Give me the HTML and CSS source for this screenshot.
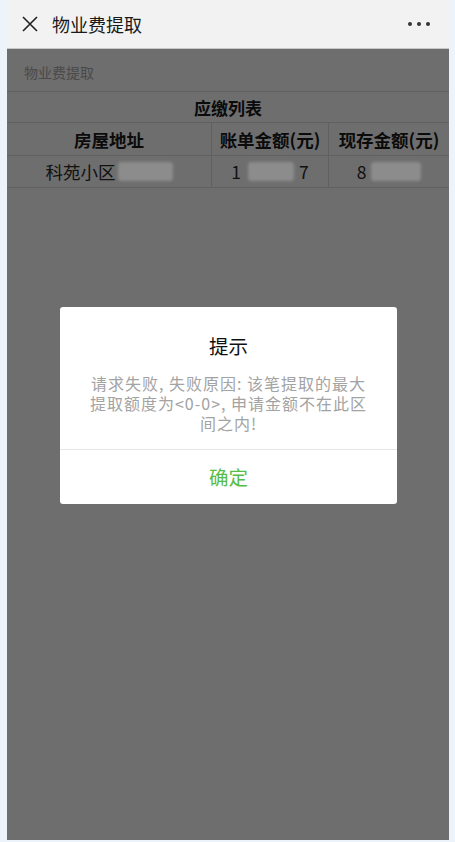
FILE: index.html
```html
<!DOCTYPE html>
<html lang="zh">
<head>
<meta charset="UTF-8">
<title>物业费提取</title>
<link rel="stylesheet" href="styles.css">
</head>
<body>
	<div class="phone">
		<header class="topbar">
			<svg class="icon-close" width="16" height="16" viewBox="0 0 16 16">
				<path d="M1 1L15 15M15 1L1 15" stroke="#222" stroke-width="1.6" fill="none"/>
			</svg>
			<span class="topbar-title">物业费提取</span>
			<span class="topbar-more">
				<i></i><i></i><i></i>
			</span>
		</header>
		<main class="page">
			<div class="page-sub">物业费提取</div>
			<div class="list-title">应缴列表</div>
			<div class="list-row list-head">
				<div class="cell c1">房屋地址</div>
				<div class="cell c2">账单金额(元)</div>
				<div class="cell c3">现存金额(元)</div>
			</div>
			<div class="list-row list-data">
				<div class="cell c1">科苑小区<span class="mask mask-addr"></span></div>
				<div class="cell c2">1<span class="mask mask-bill"></span>7</div>
				<div class="cell c3">8<span class="mask mask-left"></span></div>
			</div>

			<div class="overlay"></div>
			<div class="dialog">
				<div class="dialog-hd">提示</div>
				<div class="dialog-bd">
					<p>请求失败, 失败原因: 该笔提取的最大</p>
					<p>提取额度为&lt;0-0&gt;, 申请金额不在此区</p>
					<p>间之内!</p>
				</div>
				<div class="dialog-ft">确定</div>
			</div>
		</main>
	</div>
</body>
</html>
```

FILE: styles.css
```css
*{padding:0;margin:0;box-sizing:border-box;}
body{
	background:#edf3fb;
	font-family:"Noto Sans CJK SC","Noto Sans",sans-serif;
}
.phone{
	width:442px;
	height:842px;
	margin-left:7px;
	display:flex;
	flex-direction:column;
}
.topbar{
	height:49px;
	background:#f2f2f2;
	border-bottom:1px solid #c8c8c8;
	display:flex;
	align-items:center;
	padding:0 19px 0 15px;
}
.icon-close{margin-right:14px;}
.topbar-title{
	font-size:18px;
	color:#1a1a1a;
	flex:1;
}
.topbar-more{
	display:flex;
	gap:5px;
}
.topbar-more i{
	width:4px;
	height:4px;
	border-radius:50%;
	background:#333;
}
.page{
	flex:1;
	position:relative;
	background:#fcfcfc;
	margin-bottom:2px;
}
.page-sub{
	height:43px;
	line-height:46px;
	padding-left:17px;
	font-size:14px;
	color:#aaa;
	border-bottom:1px solid #dcdcdc;
}
.list-title{
	height:31px;
	line-height:32px;
	text-align:center;
	font-size:17px;
	font-weight:bold;
	color:#1a1a1a;
	border-bottom:1px solid #dcdcdc;
}
.list-row{
	display:flex;
	height:33px;
	border-bottom:1px solid #dcdcdc;
}
.list-data{height:32px;}
.list-head .cell{font-weight:bold;color:#1a1a1a;font-size:17.5px;}
.cell{
	display:flex;
	align-items:center;
	justify-content:center;
	font-size:17.5px;
	color:#2a2a2a;
}
.c1{width:205px;border-right:1px solid #dcdcdc;}
.c2{width:117px;border-right:1px solid #dcdcdc;}
.c3{flex:1;}
.mask{
	display:inline-block;
	height:19px;
	background:#8c8c8c;
	border-radius:3px;
	filter:blur(1.5px);
	position:relative;
	z-index:2;
}
.mask-addr{width:55px;margin-left:2px;}
.mask-bill{width:46px;margin:0 5px 0 7px;}
.mask-left{width:50px;margin-left:5px;}
.overlay{
	position:absolute;
	top:0;
	left:0;
	right:0;
	bottom:0;
	background:rgba(0,0,0,0.565);
}
.dialog{
	position:absolute;
	top:258px;
	left:53px;
	width:337px;
	background:#fff;
	border-radius:3px;
	text-align:center;
	z-index:3;
}
.dialog-hd{
	padding-top:25px;
	font-size:19.5px;
	line-height:28px;
	color:#111;
}
.dialog-bd{
	padding:13px 10px 16px;
	font-size:16px;
	letter-spacing:1px;
	line-height:20px;
	color:#a3a3a3;
}
.dialog-bd p{height:20px;}
.dialog-ft{
	height:55px;
	line-height:53px;
	border-top:1px solid #e6e6e6;
	font-size:19.5px;
	color:#56bd47;
}
```
